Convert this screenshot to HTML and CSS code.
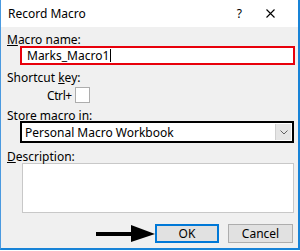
FILE: index.html
```html
<!DOCTYPE html>
<html lang="en">
<head>
  <meta charset="UTF-8" />
  <title>Record Macro</title>
  <link rel="stylesheet" href="styles.css">
</head>
<body>
  <div class="dialog">
    <!-- Title bar -->
    <div class="titlebar">
      <span class="title">Record Macro</span>
      <span class="help">?</span>
      <svg class="close" width="9" height="9" viewBox="0 0 9 9">
        <path d="M0.5 0.5 L8.5 8.5 M8.5 0.5 L0.5 8.5" stroke="#000" stroke-width="1.1" fill="none"/>
      </svg>
    </div>

    <div class="content">
      <div class="label first"><u>M</u>acro name:</div>
      <div class="name-box">Marks_Macro1<span class="caret"></span></div>

      <div class="label">Shortcut <u>k</u>ey:</div>
      <div class="shortcut">
        <span class="ctrl">Ctrl+</span>
        <span class="key-box"></span>
      </div>

      <div class="label">Store macro <u>i</u>n:</div>
      <div class="store-box">
        <span class="store-text">Personal Macro Workbook</span>
        <span class="drop">
          <svg width="8" height="5" viewBox="0 0 8 5">
            <path d="M0.5 0.5 L4 4 L7.5 0.5" stroke="#606060" stroke-width="1" fill="none"/>
          </svg>
        </span>
      </div>

      <div class="label desc-label"><u>D</u>escription:</div>
      <div class="desc-box"></div>

      <div class="buttons">
        <svg class="pointer" width="59" height="17" viewBox="0 0 59 17">
          <rect x="0" y="7" width="36" height="4" fill="#000"/>
          <polygon points="35,0 59,9 35,17" fill="#000"/>
        </svg>
        <div class="btn ok">OK</div>
        <div class="btn cancel">Cancel</div>
      </div>
    </div>
  </div>
</body>
</html>
```

FILE: styles.css
```css
body {
  margin: 0;
  font-family: "Noto Sans", "Open Sans", sans-serif;
  font-size: 12px;
  color: #000;
  background: #fff;
}

.dialog {
  width: 297px;
  height: 248px;
  border-left: 1px solid #4a9ae0;
  border-right: 2px solid #1883d7;
  border-bottom: 2px solid #1883d7;
  display: flex;
  flex-direction: column;
}

.titlebar {
  height: 27px;
  background: #fff;
  display: flex;
  align-items: center;
  padding: 0 23px 0 7px;
}

.title {
  flex: 1;
}

.help {
  margin-right: 24px;
}

.content {
  flex: 1;
  background: #f0f0f0;
  padding: 0 3px 0 6px;
}

.label {
  line-height: 11px;
  margin-top: 7px;
}

.desc-label {
  margin-top: 8px;
}

.name-box {
  margin: 1px 0 0 13px;
  height: 15px;
  border: 2px solid #e8000b;
  background: #fff;
  line-height: 15px;
  padding: 0 5px;
}

.caret {
  display: inline-block;
  width: 1px;
  height: 13px;
  background: #000;
  vertical-align: -2px;
  margin-left: 1px;
}

.shortcut {
  display: flex;
  align-items: center;
  margin: 4px 0 0 40px;
  height: 16px;
}

.ctrl {
  letter-spacing: -0.4px;
}

.key-box {
  width: 13px;
  height: 14px;
  margin-left: 3px;
  background: #fff;
  border: 1px solid #adadad;
}

.store-box {
  margin: 0 1px 0 13px;
  height: 18px;
  border: 2px solid #000;
  background: #fff;
  display: flex;
  align-items: center;
}

.store-text {
  flex: 1;
  padding-left: 3px;
}

.drop {
  width: 15px;
  height: 16px;
  margin-right: 1px;
  background: #e5e5e5;
  border-left: 1px solid #d0d0d0;
  display: flex;
  align-items: center;
  justify-content: center;
}

.desc-box {
  margin: 1px 1px 0 15px;
  height: 48px;
  background: #fff;
  border: 1px solid #c8c8c8;
}

.buttons {
  display: flex;
  justify-content: flex-end;
  align-items: center;
  margin-top: 11px;
  padding-right: 2px;
}

.btn {
  height: 17px;
  line-height: 17px;
  text-align: center;
  background: #e1e1e1;
  border: 1px solid #adadad;
}

.btn.ok {
  width: 62px;
  border-color: #0078d7;
  box-shadow: inset 0 0 0 1px #0078d7;
}

.btn.cancel {
  width: 63px;
  margin-left: 9px;
}
```
